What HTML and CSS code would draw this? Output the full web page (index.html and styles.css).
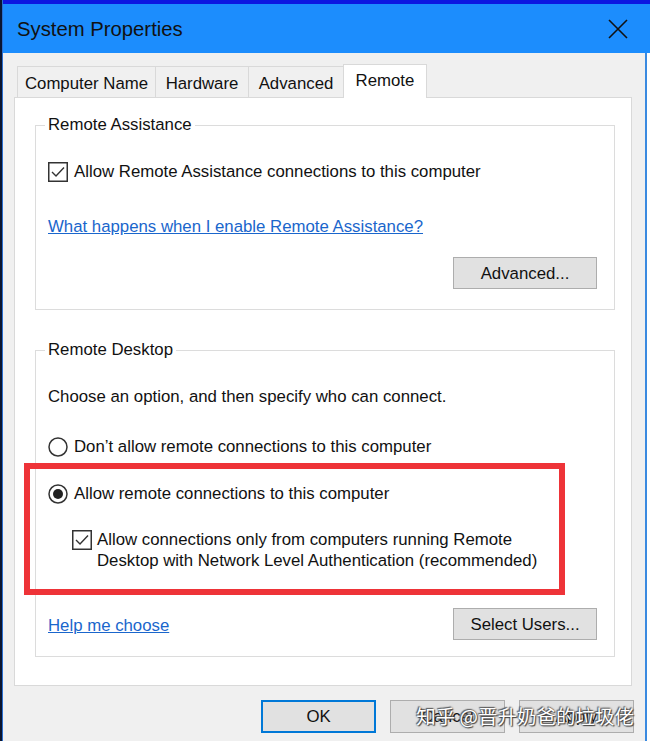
FILE: index.html
```html
<!DOCTYPE html>
<html lang="en">
<head>
<meta charset="utf-8">
<title>System Properties</title>
<link rel="stylesheet" href="styles.css">
</head>
<body>
<div class="desktop">
  <div class="edge-left"></div>
  <div class="window">
    <div class="titlebar">
      <span class="title">System Properties</span>
      <svg class="close" width="22" height="22" viewBox="0 0 22 22" aria-label="Close">
        <path d="M2 2 L20 20 M20 2 L2 20" stroke="#111" stroke-width="1.6" fill="none"/>
      </svg>
    </div>
    <div class="client">
      <div class="tabs">
        <div class="tab tab-cn">Computer Name</div>
        <div class="tab tab-hw">Hardware</div>
        <div class="tab tab-adv">Advanced</div>
        <div class="tab tab-remote active">Remote</div>
      </div>
      <div class="panel">
        <fieldset class="group group-ra">
          <legend>Remote Assistance</legend>
          <div class="gbody">
            <div class="row check-row">
              <svg class="box" width="20" height="20" viewBox="0 0 20 20"><rect x="0.75" y="0.75" width="18.5" height="18.5" fill="#fff" stroke="#333" stroke-width="1.5"/><path d="M4 10 L8 14 L16 5.5" fill="none" stroke="#333" stroke-width="1.4"/></svg>
              <span>Allow Remote Assistance connections to this computer</span>
            </div>
            <a class="link link-ra" href="#">What happens when I enable Remote Assistance?</a>
            <div class="btn-row btn-row-ra">
              <button class="btn">Advanced...</button>
            </div>
          </div>
        </fieldset>
        <fieldset class="group group-rd">
          <legend>Remote Desktop</legend>
          <div class="gbody">
            <div class="row text-row">Choose an option, and then specify who can connect.</div>
            <div class="row radio-row radio-1">
              <svg class="box" width="20" height="20" viewBox="0 0 20 20"><circle cx="10" cy="10" r="9" fill="#fff" stroke="#333" stroke-width="1.5"/></svg>
              <span>Don’t allow remote connections to this computer</span>
            </div>
            <div class="row radio-row radio-2">
              <svg class="box" width="20" height="20" viewBox="0 0 20 20"><circle cx="10" cy="10" r="9" fill="#fff" stroke="#333" stroke-width="1.5"/><circle cx="10" cy="10" r="5" fill="#222"/></svg>
              <span>Allow remote connections to this computer</span>
            </div>
            <div class="row sub-check">
              <svg class="box" width="20" height="20" viewBox="0 0 20 20"><rect x="0.75" y="0.75" width="18.5" height="18.5" fill="#fff" stroke="#333" stroke-width="1.5"/><path d="M4 10 L8 14 L16 5.5" fill="none" stroke="#333" stroke-width="1.4"/></svg>
              <span>Allow connections only from computers running Remote<br>Desktop with Network Level Authentication (recommended)</span>
            </div>
            <div class="btn-row btn-row-rd">
              <a class="link" href="#">Help me choose</a>
              <button class="btn">Select Users...</button>
            </div>
          </div>
        </fieldset>
        <div class="highlight"></div>
      </div>
      <div class="footer">
        <button class="btn dlg ok">OK</button>
        <button class="btn dlg">Cancel</button>
        <button class="btn dlg">Apply</button>
        <div class="watermark">知乎 @晋升奶爸的垃圾佬</div>
      </div>
    </div>
  </div>
  <div class="edge-right">
    <div class="er-top"></div>
    <div class="er-body"></div>
  </div>
</div>
</body>
</html>
```

FILE: styles.css
```css
* { box-sizing: border-box; }

html, body {
  margin: 0;
  padding: 0;
  width: 650px;
  height: 741px;
  overflow: hidden;
}

body {
  background: #0c16e0;
  font-family: "Liberation Sans", Arial, sans-serif;
  font-size: 16.8px;
  color: #111;
}

.desktop {
  display: flex;
  width: 650px;
  height: 741px;
}

.edge-left {
  width: 3px;
  background: linear-gradient(90deg, #0a1530 0, #0a1530 2px, #2a6fd0 2px);
}

.window {
  width: 642px;
  margin-top: 4px;
  display: flex;
  flex-direction: column;
}

.titlebar {
  height: 49px;
  background: #1c8dfd;
  display: flex;
  align-items: center;
  justify-content: space-between;
  padding: 1px 16px 0 14px;
}

.title {
  font-size: 20.3px;
  color: #111;
  line-height: 24px;
}

.close { display: block; }

.client {
  flex: 1;
  background: #f0f0f0;
  padding: 11px 13px 0 11px;
}

.tabs {
  display: flex;
  align-items: flex-end;
  height: 34px;
  padding-left: 3px;
  position: relative;
  z-index: 1;
}

.tab {
  height: 31px;
  margin-bottom: 1px;
  border: 1px solid #d9d9d9;
  border-bottom: none;
  background: #f0f0f0;
  display: flex;
  align-items: center;
  justify-content: center;
  padding-top: 3px;
  margin-left: -1px;
  line-height: 22px;
}

.tab-cn { width: 139px; margin-left: 0; }
.tab-hw { width: 94px; }
.tab-adv { width: 96px; }

.tab.active {
  width: 84px;
  height: 34px;
  margin-bottom: 0;
  background: #fff;
  padding-top: 0;
  padding-bottom: 2px;
}

.panel {
  position: relative;
  margin-top: -1px;
  height: 589px;
  background: #fff;
  border: 1px solid #d9d9d9;
  padding: 16px 16px 0 20px;
}

.group {
  margin: 0;
  border: 1px solid #dcdcdc;
  padding: 0 17px 20px 9px;
  min-width: 0;
}

.group legend {
  padding: 0 3px;
  line-height: 22px;
}

.gbody {
  padding-left: 3px;
}

.group-rd {
  margin-top: 29px;
  padding-bottom: 16px;
}

.row {
  display: flex;
  align-items: center;
  line-height: 22px;
}

.row .box {
  flex: none;
  margin-right: 6px;
}

.check-row { margin-top: 25px; }

.link {
  display: block;
  color: #1a66cc;
  text-decoration: underline;
  line-height: 22px;
}

.link-ra { margin-top: 33px; }

.btn-row {
  display: flex;
  align-items: center;
  justify-content: flex-end;
}

.btn-row-ra { margin-top: 19px; }

.btn {
  font: inherit;
  color: #111;
  width: 144px;
  height: 32px;
  background: #e1e1e1;
  border: 1px solid #adadad;
  padding: 1px 0 0;
  border-radius: 0;
}

.text-row { margin-top: 25px; }
.radio-1 { margin-top: 28px; }
.radio-2 { margin-top: 25px; }

.sub-check {
  margin-top: 24px;
  margin-left: 24px;
  align-items: flex-start;
  line-height: 21px;
}

.sub-check .box {
  margin-top: 1px;
  margin-right: 5px;
}

.btn-row-rd {
  margin-top: 37px;
  justify-content: space-between;
}

.btn-row-rd .link { margin-top: 3px; }

.highlight {
  position: absolute;
  left: 9px;
  top: 365px;
  width: 541px;
  height: 132px;
  border: 6px solid #ee3338;
  pointer-events: none;
}

.footer {
  position: relative;
  margin-top: 14px;
  margin-right: -2px;
  display: flex;
  justify-content: flex-end;
  gap: 14px;
}

.btn.dlg {
  width: 115px;
  height: 33px;
}

.btn.ok {
  border: 2px solid #0078d7;
}

.watermark {
  position: absolute;
  right: 0;
  top: 3px;
  font-family: "Noto Sans CJK SC", "Noto Sans", sans-serif;
  font-size: 19.5px;
  line-height: 26px;
  color: #fff;
  text-shadow: 0 0 2px #333, 1px 1px 1px #444, -1px -1px 1px #666;
  white-space: nowrap;
  pointer-events: none;
}

.edge-right {
  width: 5px;
  margin-top: 4px;
  display: flex;
  flex-direction: column;
}

.er-top {
  height: 49px;
  background: #1c8dfd;
}

.er-body {
  flex: 1;
  background: #fff;
  border-left: 2px solid #3a8ae0;
}
```
